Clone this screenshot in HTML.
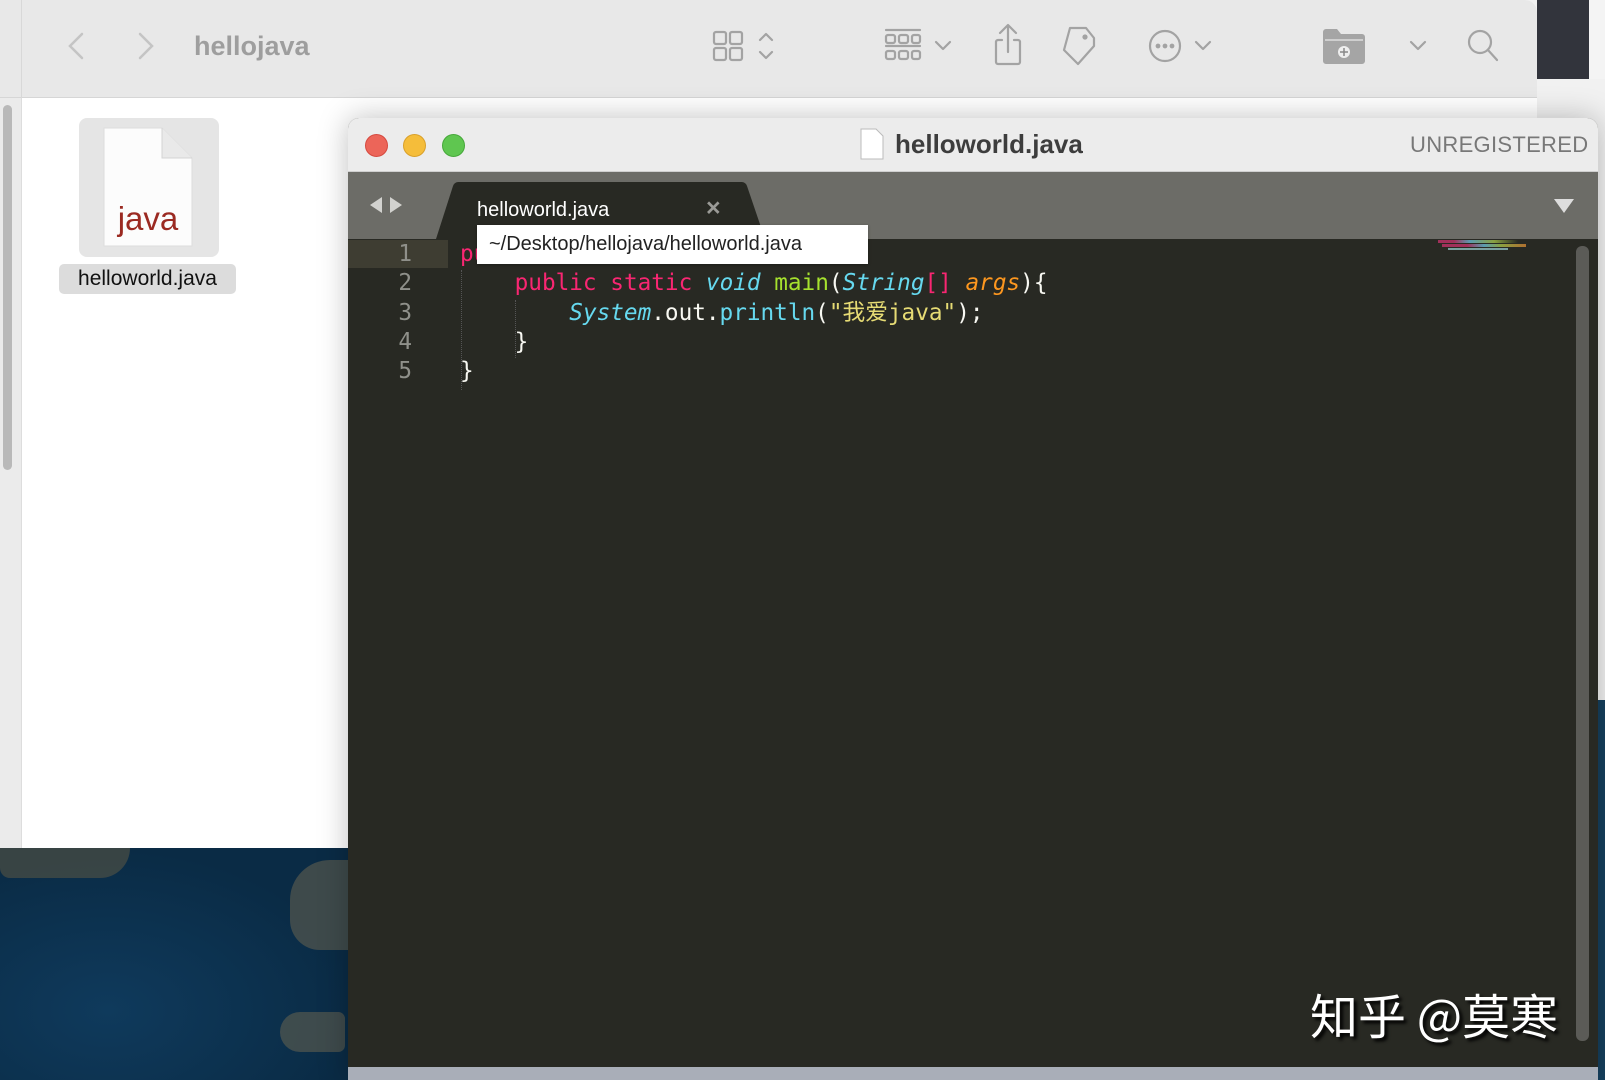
<!DOCTYPE html>
<html><head><meta charset="utf-8"><style>
*{margin:0;padding:0;box-sizing:border-box}
body{width:1605px;height:1080px;overflow:hidden;position:relative;background:#f1f1f1;font-family:"Liberation Sans","Noto Sans CJK SC",sans-serif}
.abs{position:absolute}
.code{font-family:"DejaVu Sans Mono","Liberation Mono","Noto Sans CJK SC",monospace;font-size:22.7px;color:#f8f8f2;white-space:pre;line-height:29.3px}
.k{color:#f92672}.t{color:#66d9ef;font-style:italic}.f{color:#a6e22e}.a{color:#fd971f;font-style:italic}.s{color:#e6db74}.c{color:#66d9ef}
</style></head><body>
<div class="abs" style="left:1537px;top:0;width:52px;height:79px;background:#32343c"></div>
<div class="abs" style="left:1589px;top:0;width:16px;height:79px;background:#f4f4f4"></div>
<div class="abs" style="left:1590px;top:700px;width:15px;height:380px;background:#16405e"></div>
<!-- wallpaper -->
<div class="abs" style="left:0;top:848px;width:360px;height:232px;background:radial-gradient(ellipse at 30% 70%,#0f3a5c,#0a2b45 70%)"></div>
<div class="abs" style="left:0;top:848px;width:130px;height:30px;background:#5f5a44;border-radius:0 0 60px 20px;opacity:.55"></div>
<div class="abs" style="left:290px;top:860px;width:58px;height:90px;background:#6a6450;border-radius:40px 0 0 30px;opacity:.55"></div>
<div class="abs" style="left:280px;top:1012px;width:65px;height:40px;background:#6a6450;border-radius:30px 10px 10px 30px;opacity:.55"></div>
<!-- finder -->
<div class="abs" style="left:0;top:0;width:1537px;height:848px;background:#fff;border-radius:0 12px 0 0;overflow:hidden">
 <div class="abs" style="left:0;top:0;width:1537px;height:98px;background:#e8e8e8;border-bottom:1px solid #d6d6d6"></div>
 <div class="abs" style="left:0;top:98px;width:22px;height:750px;background:#ebebeb;border-right:1px solid #ddd"></div>
 <div class="abs" style="left:21px;top:0;width:1px;height:98px;background:#d8d8d8"></div>
 <div class="abs" style="left:3px;top:105px;width:9px;height:365px;background:#b9b9b9;border-radius:5px"></div>
 <svg class="abs" style="left:60px;top:28px" width="110" height="36" fill="none" stroke="#c4c4c4" stroke-width="2.5" stroke-linecap="round"><path d="M22 6 L10 18 L22 30"/><path d="M80 6 L92 18 L80 30"/></svg>
 <div class="abs" style="left:194px;top:31px;font-size:27px;font-weight:bold;color:#9e9e9e">hellojava</div>
 <svg class="abs" style="left:700px;top:20px" width="800" height="54" fill="none" stroke="#a3a3a3" stroke-width="2.2" stroke-linecap="round" stroke-linejoin="round">
  <rect x="14" y="12" width="12" height="12" rx="2"/><rect x="30" y="12" width="12" height="12" rx="2"/><rect x="14" y="28" width="12" height="12" rx="2"/><rect x="30" y="28" width="12" height="12" rx="2"/>
  <path d="M60 20 L66 14 L72 20 M60 32 L66 38 L72 32"/>
  <path d="M186 10 H220 M186 26 H220"/><rect x="186" y="15" width="9" height="8" rx="2"/><rect x="199" y="15" width="9" height="8" rx="2"/><rect x="212" y="15" width="8" height="8" rx="2"/><rect x="186" y="31" width="9" height="8" rx="2"/><rect x="199" y="31" width="9" height="8" rx="2"/><rect x="212" y="31" width="8" height="8" rx="2"/>
  <path d="M236 22 L243 29 L250 22"/>
  <path d="M302 20 H298 a2 2 0 0 0 -2 2 V42 a2 2 0 0 0 2 2 H318 a2 2 0 0 0 2 -2 V22 a2 2 0 0 0 -2 -2 H314 M308 32 V6 M300 13 L308 5 L316 13"/>
  <path d="M370 8 L386 8 L394 18 L394 26 L378 44 L364 30 Z"/><circle cx="385" cy="17" r="1.5" fill="#a3a3a3"/>
  <circle cx="465" cy="26" r="15"/><circle cx="458" cy="26" r="1.3" fill="#a3a3a3"/><circle cx="465" cy="26" r="1.3" fill="#a3a3a3"/><circle cx="472" cy="26" r="1.3" fill="#a3a3a3"/>
  <path d="M496 22 L503 29 L510 22"/>
  <path d="M711 22 L718 29 L725 22"/>
  <circle cx="780" cy="22" r="11"/><path d="M788 30 L797 40"/>
 </svg>
 <svg class="abs" style="left:1321px;top:26px" width="46" height="40"><path d="M2 6 a3 3 0 0 1 3 -3 H16 L20 8 H41 a3 3 0 0 1 3 3 V35 a3 3 0 0 1 -3 3 H5 a3 3 0 0 1 -3 -3Z" fill="#a5a5a5"/><path d="M4 14 H42" stroke="#ddd" stroke-width="1.5"/><circle cx="23" cy="26" r="6" fill="#eee"/><path d="M23 22 V30 M19 26 H27" stroke="#888" stroke-width="1.5"/></svg>
 <div class="abs" style="left:79px;top:118px;width:140px;height:139px;background:#e5e5e5;border-radius:8px"></div>
 <svg class="abs" style="left:100px;top:126px" width="96" height="124"><path d="M4 2 H62 L92 32 V120 H4 Z" fill="#fcfcfc" stroke="#ddd"/><path d="M62 2 V32 H92" fill="#e9e9e9" stroke="#d4d4d4"/><text x="48" y="104" text-anchor="middle" font-family="Liberation Sans,sans-serif" font-size="33" fill="#9b2a22">java</text></svg>
 <div class="abs" style="left:59px;top:264px;width:177px;height:30px;background:#dcdcdc;border-radius:5px;font-size:21px;color:#111;text-align:center;line-height:30px">helloworld.java</div>
</div>
<!-- editor -->
<div class="abs" style="left:348px;top:118px;width:1250px;height:962px;border-radius:11px 11px 0 0;overflow:hidden;background:#282923;box-shadow:0 0 30px rgba(0,0,0,.25)">
 <div class="abs" style="left:0;top:0;width:1250px;height:54px;background:#ececec;border-bottom:1px solid #cfcfcf"></div>
 <div class="abs" style="left:17px;top:16px;width:23px;height:23px;border-radius:50%;background:#ec6559;border:1px solid #d5493f"></div>
 <div class="abs" style="left:55px;top:16px;width:23px;height:23px;border-radius:50%;background:#f5bd3a;border:1px solid #d9a02a"></div>
 <div class="abs" style="left:94px;top:16px;width:23px;height:23px;border-radius:50%;background:#5fc650;border:1px solid #46a83a"></div>
 <svg class="abs" style="left:511px;top:9px" width="26" height="34"><path d="M2 2 H17 L24 9 V32 H2Z" fill="#fff" stroke="#bbb"/></svg>
 <div class="abs" style="left:547px;top:11px;font-size:26px;font-weight:bold;color:#3d3d3d">helloworld.java</div>
 <div class="abs" style="left:1062px;top:14px;font-size:22px;color:#787878;letter-spacing:.3px">UNREGISTERED</div>
 <div class="abs" style="left:0;top:54px;width:1250px;height:67px;background:#6c6c67"></div>
 <svg class="abs" style="left:20px;top:77px" width="40" height="20"><path d="M14 2 L2 10 L14 18Z M22 2 L34 10 L22 18Z" fill="#d2d2cf"/></svg>
 <svg class="abs" style="left:88px;top:64px" width="330" height="57"><path d="M22 0 H306 a6 6 0 0 1 5 4 L329 57 H0 L17 4 a6 6 0 0 1 5 -4Z" fill="#282923"/></svg>
 <div class="abs" style="left:129px;top:81px;font-size:20px;color:#fff">helloworld.java</div>
 <div class="abs" style="left:358px;top:76px;font-size:25px;color:#9a9a96;font-weight:bold">×</div>
 <svg class="abs" style="left:1205px;top:80px" width="22" height="16"><path d="M1 1 H21 L11 15Z" fill="#ddd"/></svg>
 <div class="abs" style="left:0;top:122px;width:100px;height:28px;background:#3e3d32"></div>
 <div class="abs code" style="left:14px;top:122px;width:50px;text-align:right;color:#8f908a">1
2
3
4
5</div>
 <div class="abs" style="left:113px;top:152px;width:0;height:120px;border-left:1px dotted #555"></div>
 <div class="abs" style="left:167px;top:182px;width:0;height:58px;border-left:1px dotted #555"></div>
 <div class="abs code" style="left:112px;top:122px"><span class="k">pu</span>
    <span class="k">public</span> <span class="k">static</span> <span class="t">void</span> <span class="f">main</span>(<span class="t">String</span><span class="k">[]</span> <span class="a">args</span>){
        <span class="t">System</span>.out.<span class="c">println</span>(<span class="s">"我爱java"</span>);
    }
}</div>
 <div class="abs" style="left:129px;top:107px;width:391px;height:39px;background:#fff;font-size:20px;color:#222;line-height:39px;padding-left:12px;box-shadow:0 1px 3px rgba(0,0,0,.3)">~/Desktop/hellojava/helloworld.java</div>
 <div class="abs" style="left:1090px;top:122px;width:80px;height:3px;background:linear-gradient(90deg,#a0305a 20%,#5a9cb0 40%,#8aa040 70%,transparent)"></div>
 <div class="abs" style="left:1094px;top:126px;width:84px;height:3px;background:linear-gradient(90deg,#a0305a 30%,#5a9cb0 50%,#8aa040 70%,#b07030)"></div>
 <div class="abs" style="left:1100px;top:130px;width:60px;height:2px;background:#7aa0a0"></div>
 <div class="abs" style="left:1228px;top:128px;width:13px;height:795px;background:#5b5b57;border-radius:6px"></div>
 <div class="abs" style="left:0;top:949px;width:1250px;height:13px;background:#a9aeb8"></div>
 <div class="abs" style="left:962px;top:860px;font-size:48px;color:#fff;text-shadow:3px 3px 3px #000;font-family:'Noto Sans CJK SC','Liberation Sans',sans-serif">知乎 @莫寒</div>
</div>
</body></html>
